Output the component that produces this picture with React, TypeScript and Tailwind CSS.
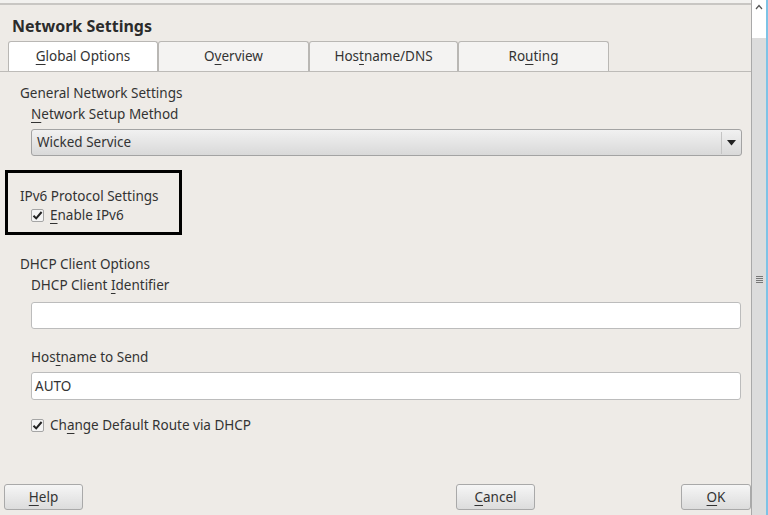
import type { ReactNode } from 'react'

const font = { fontFamily: '"Noto Sans", "Open Sans", sans-serif' }

// letter with a mnemonic underline, like Qt shortcuts
function M({ children }: { children: ReactNode }) {
  return <span className="underline decoration-1 underline-offset-[3px]">{children}</span>
}

function Check({ children }: { children: ReactNode }) {
  return (
    <div className="flex items-center gap-[6px]">
      <span className="flex h-[13px] w-[13px] items-center justify-center rounded-[2px] border border-[#a5a5a5] bg-[#f4f4f4]">
        <svg width="11" height="11" viewBox="0 0 11 11">
          <path d="M1.5 5.8 L4.2 8.4 L9.6 2" fill="none" stroke="#222" strokeWidth="2" />
        </svg>
      </span>
      <span>{children}</span>
    </div>
  )
}

function Tab({ active, children, w }: { active?: boolean; children: ReactNode; w: string }) {
  return (
    <div
      className={`${w} flex h-[30px] items-center justify-center rounded-t-[3px] border border-b-0 border-[#b9b7b4] ${
        active ? 'bg-white' : 'bg-[#f4f3f2]'
      }`}
    >
      {children}
    </div>
  )
}

function Button({ children, w }: { children: ReactNode; w: string }) {
  return (
    <div
      className={`${w} flex h-[26px] items-center justify-center rounded-[3px] border border-[#a9a9a9] bg-gradient-to-b from-[#f6f6f6] to-[#dcdcdc]`}
    >
      {children}
    </div>
  )
}

export default function App() {
  return (
    <div style={font} className="flex h-[515px] w-[768px] overflow-hidden bg-[#f2f1ef] text-[13.5px] text-[#333]">
      <div className="flex w-[751px] flex-col pt-[3px]">
        <div className="flex flex-1 flex-col border-t-2 border-[#c8c6c3] bg-[#eeebe7]">
          <h1 className="ml-[12px] mt-[10px] text-[16px] font-bold leading-[22px] text-[#2b2b2b]">Network Settings</h1>

          {/* tabs */}
          <div className="ml-[8px] mt-[4px] flex">
            <Tab active w="w-[150px]">
              <span>
                <M>G</M>lobal Options
              </span>
            </Tab>
            <Tab w="w-[151px]">
              <span>
                O<M>v</M>erview
              </span>
            </Tab>
            <Tab w="w-[149px]">
              <span>
                Hos<M>t</M>name/DNS
              </span>
            </Tab>
            <Tab w="w-[151px]">
              <span>
                Ro<M>u</M>ting
              </span>
            </Tab>
          </div>
          <div className="h-px bg-[#bdbbb8]" />

          <div className="mt-[12px] pl-[20px] leading-[18px]">General Network Settings</div>
          <div className="mt-[3px] pl-[31px] leading-[18px]">
            <M>N</M>etwork Setup Method
          </div>
          <div className="ml-[31px] mr-[9px] mt-[6px] flex h-[27px] items-center rounded-[3px] border border-[#a3a3a3] bg-gradient-to-b from-[#f1f1f1] to-[#d9d9d9] pl-[5px]">
            <span className="flex-1">Wicked Service</span>
            <span className="flex h-[22px] w-[20px] items-center justify-center border-l border-[#c4c4c4]">
              <svg width="9" height="6" viewBox="0 0 9 6">
                <path d="M0 0 H9 L4.5 5.5 Z" fill="#222" />
              </svg>
            </span>
          </div>

          {/* highlighted group */}
          <div className="ml-[5px] mt-[14px] w-[177px] border-[3px] border-black pb-[8px] pl-[12px] pt-[14px] leading-[18px]">
            <div>IPv6 Protocol Settings</div>
            <div className="ml-[11px] mt-[1px]">
              <Check>
                <M>E</M>nable IPv6
              </Check>
            </div>
          </div>

          <div className="mt-[20px] pl-[20px] leading-[18px]">DHCP Client Options</div>
          <div className="mt-[3px] pl-[31px] leading-[18px]">
            DHCP Client <M>I</M>dentifier
          </div>
          <div className="ml-[31px] mr-[10px] mt-[8px] h-[27px] rounded-[3px] border border-[#bcbcbc] bg-white" />

          <div className="mt-[19px] pl-[31px] leading-[18px]">
            Hos<M>t</M>name to Send
          </div>
          <div className="ml-[31px] mr-[10px] mt-[6px] flex h-[28px] items-center rounded-[3px] border border-[#bcbcbc] bg-white pl-[3px]">
            AUTO
          </div>
          <div className="ml-[31px] mt-[16px] leading-[18px]">
            <Check>
              Ch<M>a</M>nge Default Route via DHCP
            </Check>
          </div>

          <div className="mt-auto mb-[5px] flex items-center">
            <div className="ml-[4px]">
              <Button w="w-[79px]">
                <span>
                  <M>H</M>elp
                </span>
              </Button>
            </div>
            <div className="ml-[373px]">
              <Button w="w-[79px]">
                <span>
                  <M>C</M>ancel
                </span>
              </Button>
            </div>
            <div className="ml-auto">
              <Button w="w-[70px]">
                <span>
                  <M>O</M>K
                </span>
              </Button>
            </div>
          </div>
        </div>
      </div>

      {/* scrollbar */}
      <div className="flex w-[15px] flex-col border-l border-[#a9a9a9]">
        <div className="flex h-[38px] justify-center bg-white pt-[4px]">
          <svg width="8" height="6" viewBox="0 0 8 6">
            <path d="M1 5 L4 1.5 L7 5" fill="none" stroke="#555" strokeWidth="1.2" />
          </svg>
        </div>
        <div className="flex flex-1 flex-col items-center justify-center bg-[#dcdcdc]">
          <div className="mt-[6px] flex flex-col gap-[1px]">
            <span className="h-px w-[7px] bg-[#777]" />
            <span className="h-px w-[7px] bg-[#777]" />
            <span className="h-px w-[7px] bg-[#777]" />
            <span className="h-px w-[7px] bg-[#777]" />
          </div>
        </div>
      </div>
      <div className="w-[2px] bg-[#7ec3e6]" />
    </div>
  )
}
